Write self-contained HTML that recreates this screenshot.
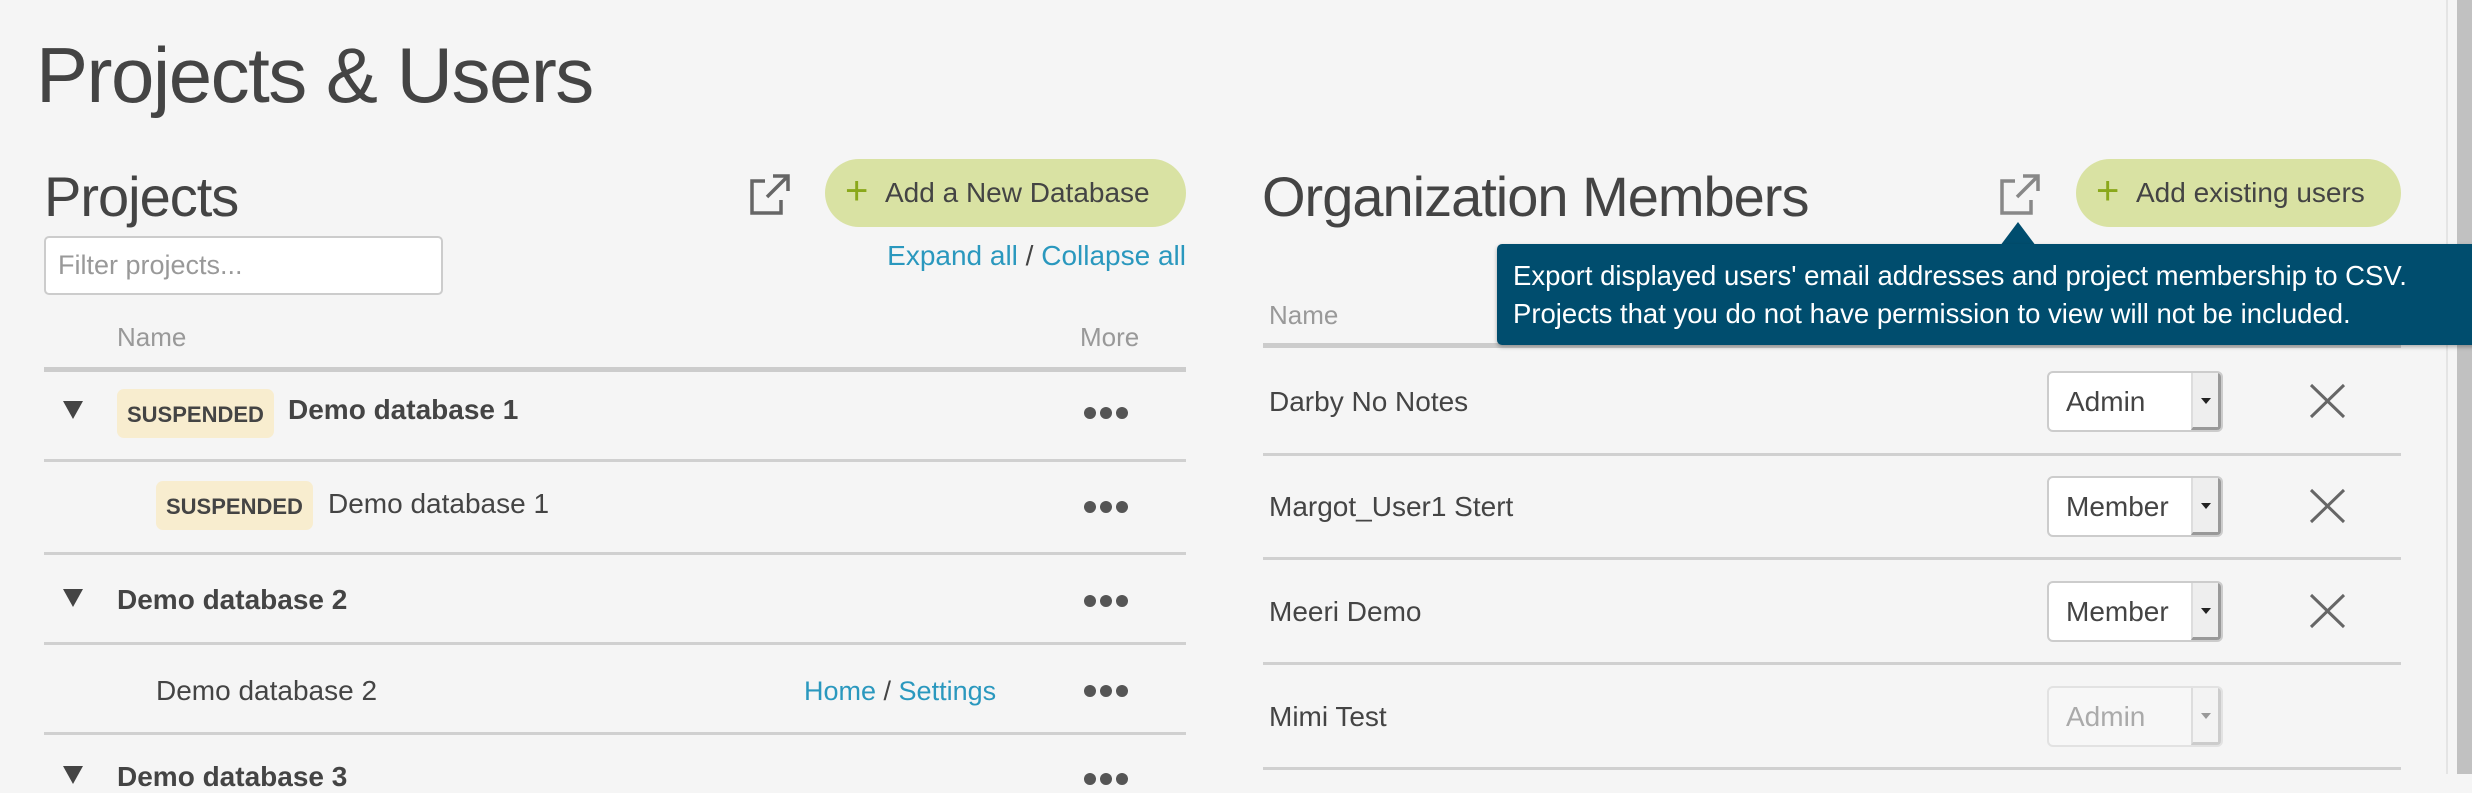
<!DOCTYPE html>
<html><head><style>
*{box-sizing:border-box;margin:0;padding:0}
body{width:2472px;height:774px;background:#f5f5f5;font-family:"Liberation Sans",sans-serif;color:#444;position:relative;overflow:hidden}
.a{position:absolute;white-space:nowrap}
.h1{left:36px;top:30px;font-size:78px;color:#444;letter-spacing:-1.5px}
.h2{font-size:56px;color:#444;top:164px;letter-spacing:-1px}
.btn{background:#d9e2a3;border-radius:34px;height:68px;top:159px;font-size:28px;color:#444;line-height:68px;padding-left:60px}
.btn:before{content:"+";position:absolute;left:20px;top:-2px;color:#8aa81a;font-size:40px}
.link{color:#2a98be}
.hdr{font-size:26px;color:#999}
.line{position:absolute;height:3px;background:#d0d0d0}
.badge{background:#f8edcf;border-radius:7px;font-size:22px;font-weight:bold;color:#444;height:49px;line-height:52px;padding:0 10px}
.dot{display:inline-block;width:12px;height:12px;border-radius:50%;background:#555;margin-right:4px}
.row{font-size:28px;color:#444}
.sel{position:absolute;left:2047px;width:176px;height:61px;background:#fff;border:2px solid #ccc;border-radius:6px;font-size:28px;line-height:57px;padding-left:17px;color:#444;overflow:hidden}
.sel .ar{position:absolute;right:0;top:0;width:30px;height:100%;background:#eee;border-left:2px solid #ddd;border-right:3px solid #999;border-bottom:3px solid #999}
.sel .ar:after{content:"";position:absolute;left:8px;top:25px;border-left:5px solid transparent;border-right:5px solid transparent;border-top:6px solid #222}
.sel.dis{color:#aaa;background:#f7f7f7;border-color:#e2e2e2}
.sel.dis .ar{border-right-color:#ccc;border-bottom-color:#ccc;background:#f3f3f3}
.sel.dis .ar:after{border-top-color:#999}
</style></head><body>
<div class="a h1">Projects &amp; Users</div>

<div class="a h2" style="left:44px">Projects</div>
<svg class="a" style="left:749px;top:173px" width="42" height="42" viewBox="0 0 42 42" fill="none" stroke="#666" stroke-width="3.5"><path d="M16 8H3V40H32V27"/><path d="M18 24L38 4M24 3H39V18"/></svg>
<div class="a btn" style="left:825px;width:361px">Add a New Database</div>
<div class="a" style="left:44px;top:236px;width:399px;height:59px;background:#fff;border:2px solid #ccc;border-radius:5px;font-size:27px;color:#999;line-height:55px;padding-left:12px">Filter projects...</div>
<div class="a" style="right:1286px;top:240px;font-size:28px"><span class="link">Expand all</span> / <span class="link">Collapse all</span></div>
<div class="a hdr" style="left:117px;top:322px">Name</div>
<div class="a hdr" style="left:1080px;top:322px">More</div>
<div class="line" style="left:44px;width:1142px;top:367px;height:5px;background:#ccc"></div>

<svg class="a" style="left:63px;top:401px" width="20" height="18"><path d="M0 0H20L10 18Z" fill="#444"/></svg>
<div class="a badge" style="left:117px;top:389px">SUSPENDED</div>
<div class="a row" style="left:288px;top:394px;font-weight:bold">Demo database 1</div>
<div class="a" style="left:1084px;top:406px"><span class="dot"></span><span class="dot"></span><span class="dot"></span></div>
<div class="line" style="left:44px;width:1142px;top:459px"></div>

<div class="a badge" style="left:156px;top:481px">SUSPENDED</div>
<div class="a row" style="left:328px;top:488px">Demo database 1</div>
<div class="a" style="left:1084px;top:500px"><span class="dot"></span><span class="dot"></span><span class="dot"></span></div>
<div class="line" style="left:44px;width:1142px;top:552px"></div>

<svg class="a" style="left:63px;top:589px" width="20" height="18"><path d="M0 0H20L10 18Z" fill="#444"/></svg>
<div class="a row" style="left:117px;top:584px;font-weight:bold">Demo database 2</div>
<div class="a" style="left:1084px;top:594px"><span class="dot"></span><span class="dot"></span><span class="dot"></span></div>
<div class="line" style="left:44px;width:1142px;top:642px"></div>

<div class="a row" style="left:156px;top:675px">Demo database 2</div>
<div class="a" style="left:804px;top:676px;font-size:27px"><span class="link">Home</span> / <span class="link">Settings</span></div>
<div class="a" style="left:1084px;top:684px"><span class="dot"></span><span class="dot"></span><span class="dot"></span></div>
<div class="line" style="left:44px;width:1142px;top:732px"></div>
<svg class="a" style="left:63px;top:766px" width="20" height="18"><path d="M0 0H20L10 18Z" fill="#444"/></svg>
<div class="a row" style="left:117px;top:761px;font-weight:bold">Demo database 3</div>
<div class="a" style="left:1084px;top:772px"><span class="dot"></span><span class="dot"></span><span class="dot"></span></div>

<div class="a h2" style="left:1262px">Organization Members</div>
<svg class="a" style="left:1999px;top:173px" width="42" height="42" viewBox="0 0 42 42" fill="none" stroke="#888" stroke-width="3.5"><path d="M16 8H3V40H32V27"/><path d="M18 24L38 4M24 3H39V18"/></svg>
<div class="a btn" style="left:2076px;width:325px">Add existing users</div>
<div class="a hdr" style="left:1269px;top:300px">Name</div>
<div class="line" style="left:1263px;width:1138px;top:343px;height:5px;background:#ccc"></div>

<div class="a row" style="left:1269px;top:386px">Darby No Notes</div>
<div class="sel" style="top:371px">Admin<div class="ar"></div></div>
<div class="line" style="left:1263px;width:1138px;top:453px"></div>
<div class="a row" style="left:1269px;top:491px">Margot_User1 Stert</div>
<div class="sel" style="top:476px">Member<div class="ar"></div></div>
<div class="line" style="left:1263px;width:1138px;top:557px"></div>
<div class="a row" style="left:1269px;top:596px">Meeri Demo</div>
<div class="sel" style="top:581px">Member<div class="ar"></div></div>
<div class="line" style="left:1263px;width:1138px;top:662px"></div>
<div class="a row" style="left:1269px;top:701px">Mimi Test</div>
<div class="sel dis" style="top:686px">Admin<div class="ar"></div></div>
<div class="line" style="left:1263px;width:1138px;top:767px"></div>

<svg class="a" style="left:2309px;top:383px" width="37" height="36"><path d="M2 2L35 34M35 2L2 34" stroke="#666" stroke-width="3"/></svg>
<svg class="a" style="left:2309px;top:488px" width="37" height="36"><path d="M2 2L35 34M35 2L2 34" stroke="#666" stroke-width="3"/></svg>
<svg class="a" style="left:2309px;top:593px" width="37" height="36"><path d="M2 2L35 34M35 2L2 34" stroke="#666" stroke-width="3"/></svg>

<div class="a" style="left:2446px;top:0;width:2px;height:774px;background:#e4e4e4"></div>
<div class="a" style="left:2457px;top:0;width:15px;height:774px;background:#c1c1c1"></div>

<svg class="a" style="left:2000px;top:222px" width="36" height="24"><path d="M0 24L18 0L36 24Z" fill="#004d6e"/></svg>
<div class="a" style="left:1497px;top:244px;width:990px;height:101px;background:#004d6e;border-radius:5px;color:#fff;font-size:27.5px;line-height:38px;padding:13px 16px;box-shadow:0 2px 4px rgba(0,0,0,.3)">Export displayed users' email addresses and project membership to CSV.<br>Projects that you do not have permission to view will not be included.</div>
</body></html>
